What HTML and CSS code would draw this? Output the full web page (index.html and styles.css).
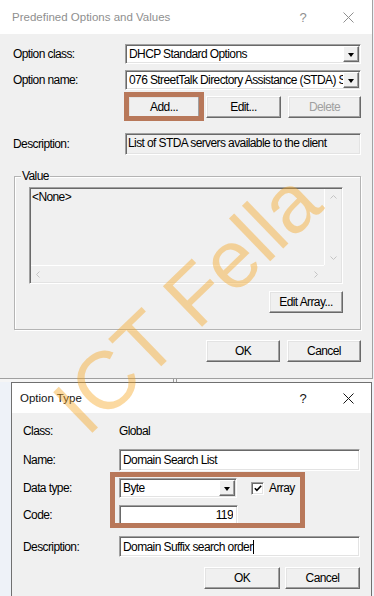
FILE: index.html
```html
<!DOCTYPE html>
<html>

<head>
    <title>Option Type</title>
    <meta name="viewport" content="width=device-width, initial-scale=1.0">
    <link rel="stylesheet" href="styles.css">
</head>

<body>
    <div class="dialog predefined">
        <div class="titlebar">
            <span class="title">Predefined Options and Values</span>
            <span class="help">?</span>
            <svg class="close" width="11" height="11" viewBox="0 0 11 11"><path d="M0.5 0.5L10.5 10.5M10.5 0.5L0.5 10.5" /></svg>
        </div>
        <div class="dialog-body">
            <div class="row">
                <span class="lbl">Option class:</span>
                <div class="field combo"><span class="field-text">DHCP Standard Options</span><span class="drop"></span></div>
            </div>
            <div class="row">
                <span class="lbl">Option name:</span>
                <div class="field combo"><span class="field-text">076 StreetTalk Directory Assistance (STDA) Servers</span><span class="drop"></span></div>
            </div>
            <div class="btn-row">
                <button class="btn btn-add">Add...</button>
                <button class="btn btn-edit">Edit...</button>
                <button class="btn btn-delete" disabled>Delete</button>
            </div>
            <div class="row desc-row">
                <span class="lbl">Description:</span>
                <div class="field readonly">List of STDA servers available to the client</div>
            </div>
            <fieldset class="group">
                <legend>Value</legend>
                <div class="listbox">
                    <div class="list-content">&lt;None&gt;</div>
                    <div class="vscroll">
                        <svg width="7" height="4" viewBox="0 0 7 4"><path d="M0.5 3.5L3.5 0.5L6.5 3.5" /></svg>
                        <svg width="7" height="4" viewBox="0 0 7 4"><path d="M0.5 0.5L3.5 3.5L6.5 0.5" /></svg>
                    </div>
                    <div class="hscroll">
                        <svg width="4" height="7" viewBox="0 0 4 7"><path d="M3.5 0.5L0.5 3.5L3.5 6.5" /></svg>
                        <svg width="4" height="7" viewBox="0 0 4 7"><path d="M0.5 0.5L3.5 3.5L0.5 6.5" /></svg>
                    </div>
                    <div class="corner"></div>
                </div>
                <div class="group-actions">
                    <button class="btn btn-array">Edit Array...</button>
                </div>
            </fieldset>
            <div class="dialog-actions">
                <button class="btn btn-ok">OK</button>
                <button class="btn btn-cancel">Cancel</button>
            </div>
        </div>
    </div>

    <div class="gap"><span class="gap-mark"></span></div>

    <div class="lower">
        <div class="desktop-strip"></div>
        <div class="dialog option-type">
            <div class="titlebar">
                <span class="title">Option Type</span>
                <span class="help">?</span>
                <svg class="close" width="11" height="11" viewBox="0 0 11 11"><path d="M0.5 0.5L10.5 10.5M10.5 0.5L0.5 10.5" /></svg>
            </div>
            <div class="dialog-body">
                <div class="ot-row ot-class">
                    <span class="lbl">Class:</span>
                    <span>Global</span>
                </div>
                <div class="ot-row ot-name">
                    <span class="lbl">Name:</span>
                    <div class="field wide"><span class="field-text">Domain Search List</span></div>
                </div>
                <div class="ot-row ot-type">
                    <span class="lbl">Data type:</span>
                    <div class="field combo short"><span class="field-text">Byte</span><span class="drop"></span></div>
                    <span class="check">
                        <svg width="8" height="7" viewBox="0 0 8 7"><path d="M0.8 3.2L2.9 5.4L7.2 0.8" /></svg>
                    </span>
                    <span class="check-label">Array</span>
                </div>
                <div class="ot-row ot-code">
                    <span class="lbl">Code:</span>
                    <div class="field short code"><span class="field-text">119</span></div>
                </div>
                <div class="ot-row ot-desc">
                    <span class="lbl">Description:</span>
                    <div class="field wide"><span class="field-text">Domain Suffix search order</span><span class="caret"></span></div>
                </div>
                <div class="ot-actions">
                    <button class="btn btn-ok2">OK</button>
                    <button class="btn btn-cancel2">Cancel</button>
                </div>
            </div>
        </div>
    </div>

    <div class="mark mark-add"></div>
    <div class="mark mark-type"></div>
    <div class="watermark">ICT Fella</div>
</body>

</html>
```

FILE: styles.css
```css
body {
    margin: 0;
    width: 374px;
    height: 596px;
    overflow: hidden;
    position: relative;
    background: #eef2f8;
    font-family: "Liberation Sans", Arial, sans-serif;
    font-size: 12px;
    letter-spacing: -0.6px;
    color: #000;
}

.dialog {
    background: #f0f0f0;
    box-sizing: border-box;
}

.predefined {
    width: 373px;
    border-right: 1px solid #a3a3a3;
    border-bottom: 1px solid #a0a0a0;
}

.titlebar {
    display: flex;
    align-items: center;
    background: #fff;
    font-size: 11.5px;
    letter-spacing: 0;
}

.predefined .titlebar {
    height: 34px;
    padding-left: 12px;
    color: #8f8f8f;
}

.option-type .titlebar {
    height: 30px;
    padding-left: 8px;
    color: #151515;
}

.title {
    flex: 1;
}

.help {
    width: 20px;
    text-align: center;
    font-size: 13px;
    margin-right: 30px;
}

.close {
    margin-right: 18px;
    stroke: currentColor;
    stroke-width: 1;
    fill: none;
}

.option-type .close {
    margin-right: 17px;
}

/* top dialog */
.predefined .dialog-body {
    padding: 10px 11px 16px 13px;
}

.row {
    display: flex;
    align-items: center;
    height: 20px;
}

.row + .row {
    margin-top: 6px;
}

.predefined .lbl {
    width: 112px;
    flex-shrink: 0;
}

.field {
    box-sizing: border-box;
    display: flex;
    align-items: center;
    height: 100%;
    background: #fff;
    border: 1px solid;
    border-color: #a0a0a0 #fff #fff #a0a0a0;
    box-shadow: inset 1px 1px 0 #696969, inset -1px -1px 0 #e3e3e3;
    padding: 0 0 0 3px;
    overflow: hidden;
    white-space: nowrap;
}

.predefined .field {
    width: 236px;
}

.field-text {
    flex: 1;
    overflow: hidden;
    white-space: nowrap;
}

.drop {
    width: 16px;
    height: 16px;
    margin-right: 1px;
    flex-shrink: 0;
    box-sizing: border-box;
    background: #f0f0f0;
    border: 1px solid;
    border-color: #fff #696969 #696969 #fff;
    box-shadow: inset -1px -1px 0 #a0a0a0;
    display: flex;
    align-items: center;
    justify-content: center;
}

.drop::after {
    content: "";
    border-left: 3px solid transparent;
    border-right: 3px solid transparent;
    border-top: 4px solid #000;
    margin-top: 1px;
}

.btn {
    box-sizing: border-box;
    height: 22px;
    padding: 0;
    font: inherit;
    letter-spacing: inherit;
    color: #000;
    background: #f0f0f0;
    border: 1px solid;
    border-color: #fff #696969 #696969 #fff;
    box-shadow: inset -1px -1px 0 #a0a0a0, inset 1px 1px 0 #e3e3e3;
}

.btn:disabled {
    color: #a0a0a0;
}

.btn-row {
    display: flex;
    margin: 6px 0 0 115px;
}

.btn-add {
    width: 72px;
}

.btn-edit {
    width: 75px;
    margin-left: 6px;
}

.btn-delete {
    width: 73px;
    margin-left: 7px;
}

.desc-row {
    height: 22px;
    margin-top: 15px;
}

.field.readonly {
    background: #f0f0f0;
    padding: 0 2px 2px 2px;
}

.group {
    box-sizing: border-box;
    width: 347px;
    margin: 14px 0 0 1px;
    padding: 0 17px 16px 14px;
    border: 1px solid #b4b4b4;
    box-shadow: inset 1px 1px 0 #fff, 1px 1px 0 #fff;
}

.group legend {
    line-height: 14px;
    padding: 0 1px;
    margin-left: -8px;
    background: #f0f0f0;
}

.listbox {
    box-sizing: border-box;
    width: 314px;
    height: 97px;
    margin-top: 4px;
    padding: 1px;
    border: 1px solid;
    border-color: #a0a0a0 #fff #fff #a0a0a0;
    box-shadow: inset 1px 1px 0 #696969, inset -1px -1px 0 #e3e3e3;
    display: grid;
    grid-template-columns: 1fr 17px;
    grid-template-rows: 1fr 17px;
}

.list-content {
    padding: 1px 0 0 1px;
    line-height: 14px;
}

.vscroll,
.hscroll {
    display: flex;
    justify-content: space-between;
    align-items: center;
}

.vscroll {
    flex-direction: column;
    border-left: 1px solid #fff;
    padding: 6px 0 5px;
}

.hscroll {
    border-top: 1px solid #fff;
    padding: 0 6px 0 5px;
}

.vscroll svg,
.hscroll svg {
    fill: none;
    stroke: #c4c4c4;
    stroke-width: 1;
}

.group-actions {
    display: flex;
    justify-content: flex-end;
    margin-top: 7px;
}

.btn-array {
    width: 74px;
}

.dialog-actions {
    display: flex;
    justify-content: flex-end;
    gap: 7px;
    margin-top: 10px;
}

.btn-ok,
.btn-cancel {
    width: 74px;
}

/* between the two windows */
.gap {
    display: flex;
    height: 3px;
    background: #f5f5f5;
}

.gap-mark {
    width: 2px;
    margin-left: 173px;
    border-left: 1px solid #9a9a9a;
    border-right: 1px solid #9a9a9a;
}

/* lower dialog */
.lower {
    display: flex;
    height: 214px;
}

.desktop-strip {
    width: 11px;
    background: #eef2f8;
}

.option-type {
    width: 361px;
    height: 100%;
    border: 1px solid #707070;
    border-bottom: none;
}

.option-type .dialog-body {
    padding: 8px 11px 0 11px;
}

.ot-row {
    display: flex;
    align-items: center;
}

.option-type .lbl {
    width: 96px;
    flex-shrink: 0;
}

.ot-class {
    height: 20px;
}

.ot-name {
    height: 22px;
    margin-top: 8px;
}

.ot-type {
    height: 20px;
    margin-top: 7px;
}

.ot-code {
    height: 20px;
    margin-top: 7px;
}

.ot-desc {
    height: 21px;
    margin-top: 11px;
}

.field.wide {
    width: 241px;
}

.field.short {
    width: 118px;
}

.field.code {
    width: 119px;
    padding-right: 4px;
    text-align: right;
}

.caret {
    width: 1px;
    height: 14px;
    background: #000;
    margin-right: auto;
}

.ot-desc .field-text {
    flex: none;
}

.check {
    box-sizing: border-box;
    width: 13px;
    height: 13px;
    margin-left: 14px;
    background: #fff;
    border: 1px solid;
    border-color: #a0a0a0 #fff #fff #a0a0a0;
    box-shadow: inset 1px 1px 0 #696969, inset -1px -1px 0 #e3e3e3;
    display: flex;
    align-items: center;
    justify-content: center;
}

.check svg {
    fill: none;
    stroke: #000;
    stroke-width: 1.6;
}

.check-label {
    margin-left: 5px;
}

.ot-actions {
    display: flex;
    justify-content: flex-end;
    gap: 5px;
    margin-top: 10px;
}

.btn-ok2 {
    width: 76px;
}

.btn-cancel2 {
    width: 75px;
}

/* annotation boxes and watermark drawn over the screenshot */
.mark {
    position: absolute;
    box-sizing: border-box;
    border: 5px solid #b8785a;
}

.mark-add {
    left: 124px;
    top: 92px;
    width: 80px;
    height: 29px;
}

.mark-type {
    left: 110px;
    top: 472px;
    width: 195px;
    height: 56px;
}

.watermark {
    position: absolute;
    left: 87px;
    top: 369px;
    font-size: 82px;
    line-height: 82px;
    letter-spacing: 0;
    white-space: nowrap;
    color: rgba(245, 165, 30, 0.42);
    transform-origin: 0 69px;
    transform: rotate(-44deg);
    pointer-events: none;
}
```
